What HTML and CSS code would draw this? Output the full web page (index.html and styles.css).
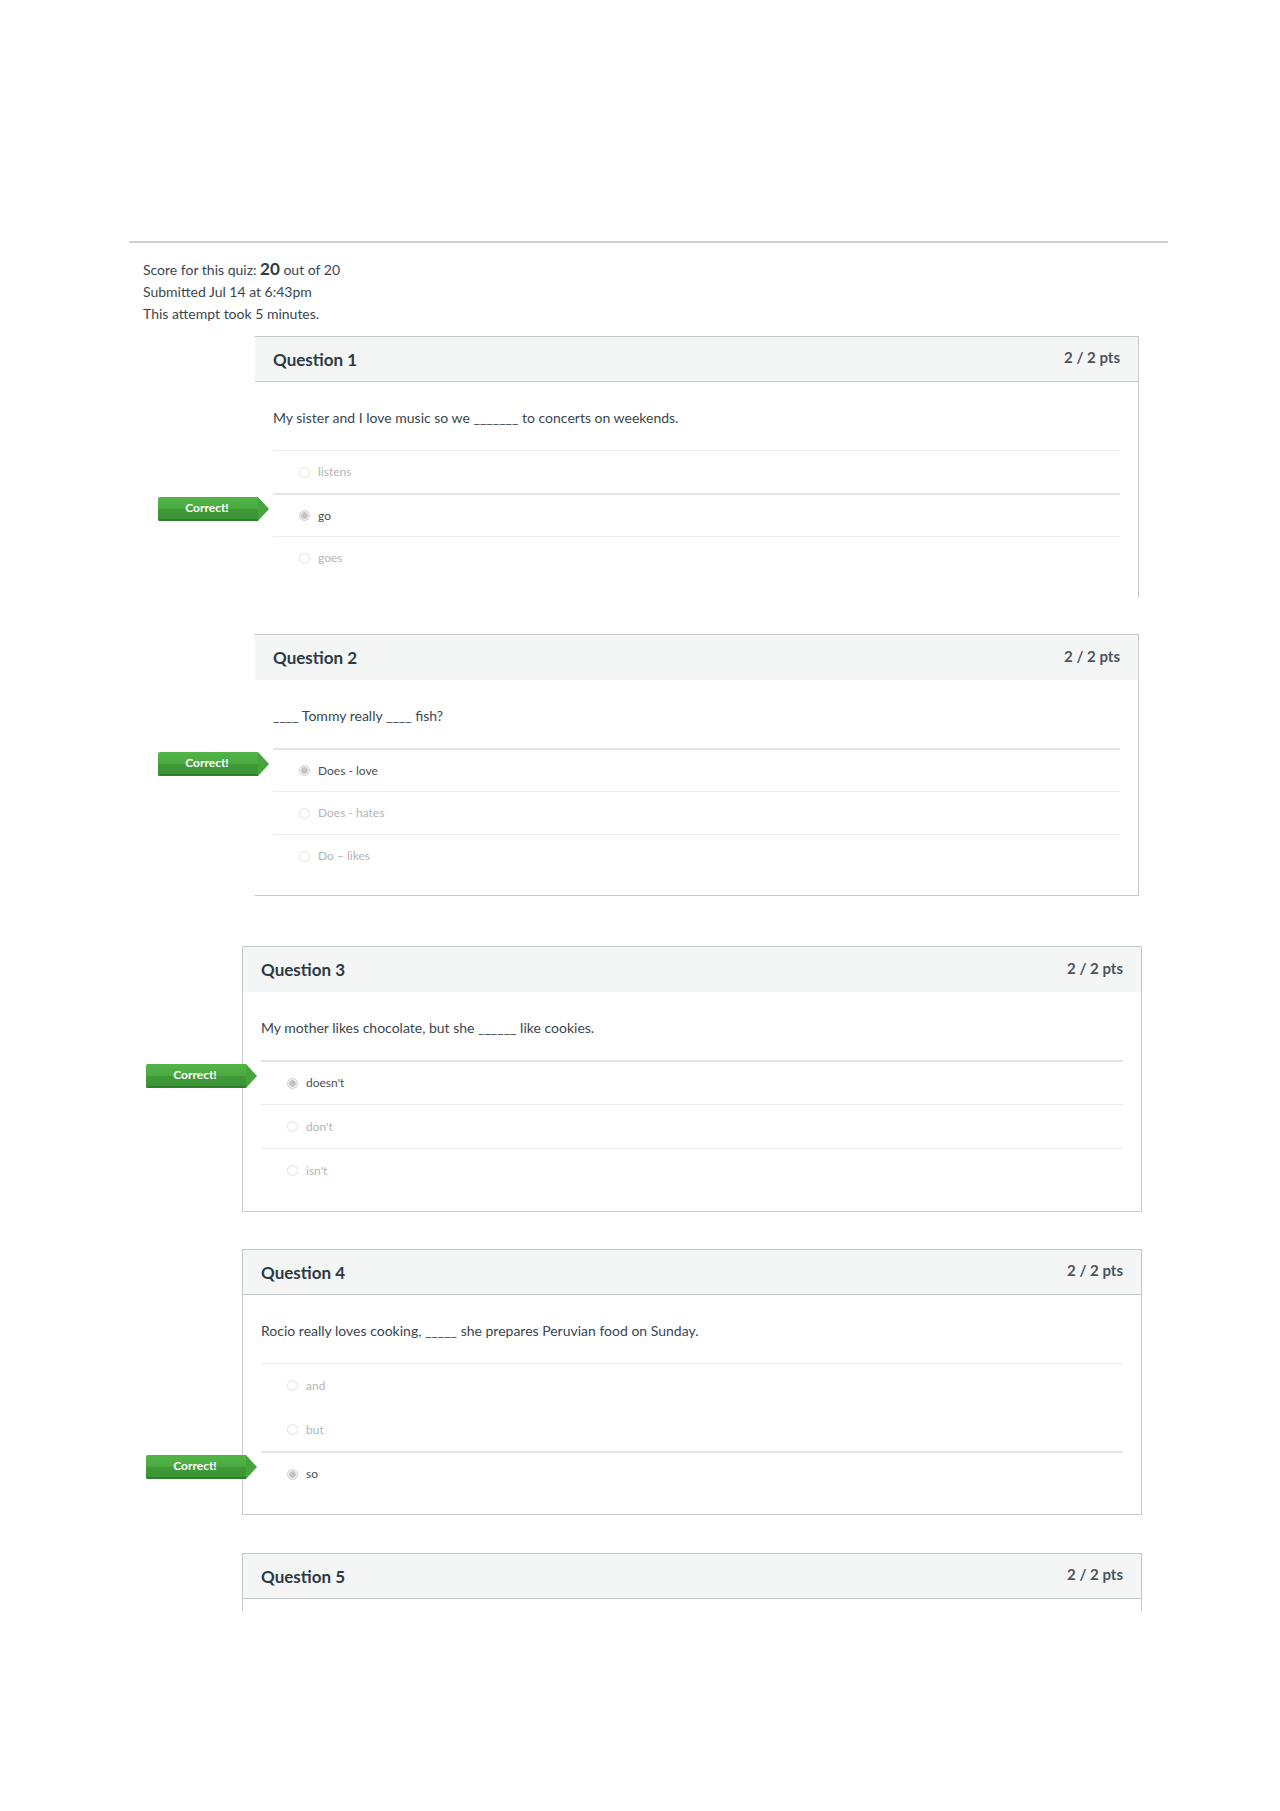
FILE: index.html
```html
<!DOCTYPE html>
<html lang="en">
<head>
<meta charset="utf-8">
<title>Quiz results</title>
<link rel="stylesheet" href="styles.css">
</head>
<body>
<div class="page">
  <div class="summary">
    <div class="summary-line">Score for this quiz: <span class="score">20</span> out of 20</div>
    <div class="summary-line">Submitted Jul 14 at 6:43pm</div>
    <div class="summary-line">This attempt took 5 minutes.</div>
  </div>

  <div class="question q-narrow no-left no-bottom">
    <div class="q-header with-rule">
      <span class="q-title">Question 1</span>
      <span class="q-pts">2 / 2 pts</span>
    </div>
    <div class="q-body">
      <div class="q-text">My sister and I love music so we _______ to concerts on weekends.</div>
      <div class="answers">
        <div class="answer"><span class="radio"></span><span class="label">listens</span></div>
        <div class="answer selected"><span class="badge">Correct!</span><span class="radio"></span><span class="label">go</span></div>
        <div class="answer"><span class="radio"></span><span class="label">goes</span></div>
      </div>
    </div>
  </div>

  <div class="question q-narrow no-left gap-q2">
    <div class="q-header">
      <span class="q-title">Question 2</span>
      <span class="q-pts">2 / 2 pts</span>
    </div>
    <div class="q-body">
      <div class="q-text">____ Tommy really ____ fish?</div>
      <div class="answers">
        <div class="answer selected"><span class="badge">Correct!</span><span class="radio"></span><span class="label">Does - love</span></div>
        <div class="answer"><span class="radio"></span><span class="label">Does - hates</span></div>
        <div class="answer"><span class="radio"></span><span class="label">Do – likes</span></div>
      </div>
    </div>
  </div>

  <div class="question q-wide gap-q3">
    <div class="q-header">
      <span class="q-title">Question 3</span>
      <span class="q-pts">2 / 2 pts</span>
    </div>
    <div class="q-body">
      <div class="q-text">My mother likes chocolate, but she ______ like cookies.</div>
      <div class="answers">
        <div class="answer selected"><span class="badge">Correct!</span><span class="radio"></span><span class="label">doesn't</span></div>
        <div class="answer"><span class="radio"></span><span class="label">don't</span></div>
        <div class="answer"><span class="radio"></span><span class="label">isn't</span></div>
      </div>
    </div>
  </div>

  <div class="question q-wide gap-q4">
    <div class="q-header with-rule">
      <span class="q-title">Question 4</span>
      <span class="q-pts">2 / 2 pts</span>
    </div>
    <div class="q-body">
      <div class="q-text">Rocio really loves cooking, _____ she prepares Peruvian food on Sunday.</div>
      <div class="answers">
        <div class="answer"><span class="radio"></span><span class="label">and</span></div>
        <div class="answer no-rule"><span class="radio"></span><span class="label">but</span></div>
        <div class="answer selected"><span class="badge">Correct!</span><span class="radio"></span><span class="label">so</span></div>
      </div>
    </div>
  </div>

  <div class="question q-wide gap-q5 no-bottom">
    <div class="q-header with-rule">
      <span class="q-title">Question 5</span>
      <span class="q-pts">2 / 2 pts</span>
    </div>
    <div class="q-body q-body-cut"></div>
  </div>
</div>
</body>
</html>
```
FILE: styles.css
```css
html, body {
  margin: 0;
  padding: 0;
  background: #ffffff;
}

body {
  font-family: Lato, "Open Sans", "Liberation Sans", sans-serif;
  color: #2d3b45;
  min-height: 1811px;
}

.page {
  margin-left: 129px;
  width: 1039px;
  padding-top: 241px;
}

.summary {
  border-top: 2px solid #cfcfcf;
  padding: 15px 0 11px 14px;
  font-size: 14px;
  color: #3a4650;
}

.summary-line {
  line-height: 22px;
  height: 22px;
}

.summary-line:first-child {
  height: 23px;
}

.score {
  font-size: 17px;
  font-weight: 700;
  color: #2d3b45;
}

/* question card */
.question {
  border: 1px solid #c6c9cc;
  background: #ffffff;
}

.q-narrow {
  margin-left: 125px;
  width: 883px;
}

.q-wide {
  margin-left: 113px;
  width: 898px;
}

.no-left {
  border-left-color: transparent;
}

.no-bottom {
  border-bottom-color: transparent;
}

.gap-q2 { margin-top: 36px; }
.gap-q3 { margin-top: 50px; }
.gap-q4 { margin-top: 37px; }
.gap-q5 { margin-top: 38px; }

.q-header {
  height: 45px;
  background: #f4f5f5;
  display: flex;
  align-items: center;
  justify-content: space-between;
  padding: 0 18px;
  box-sizing: border-box;
}

.q-header.with-rule {
  border-bottom: 1px solid #c6c9cc;
}

.q-title {
  font-size: 17px;
  font-weight: 700;
  color: #2d3b45;
}

.q-pts {
  font-size: 15px;
  font-weight: 700;
  color: #4a555d;
  margin-top: -4px;
}

.q-body {
  padding: 0 18px 18px;
}

.q-wide .q-body {
  padding-bottom: 19px;
}

.q-wide .q-body-cut,
.q-body-cut {
  height: 12px;
  padding: 0;
}

.q-text {
  font-size: 14px;
  line-height: 18px;
  padding: 27px 0 23px;
  color: #3a4650;
}

.answers {
  display: flex;
  flex-direction: column;
}

.answer {
  position: relative;
  height: 43px;
  box-sizing: border-box;
  display: flex;
  align-items: center;
  border-top: 1px solid #ececec;
  font-size: 12px;
  color: #b4b4b4;
}

.q-wide .answer {
  height: 44px;
}

.answer.no-rule {
  border-top-color: transparent;
}

.answer.selected {
  border-top: 2px solid #e4e4e4;
  color: #4a4f54;
}

.radio {
  width: 11px;
  height: 11px;
  margin-left: 26px;
  margin-right: 8px;
  border: 1px solid #e1e1e1;
  border-radius: 50%;
  box-sizing: border-box;
  background: #ffffff;
  flex: none;
}

.answer.selected .radio {
  border-color: #d0d0d0;
  background: radial-gradient(circle, #c4c4c4 0 3px, #f0f0f0 3.5px);
}

.label {
  line-height: 16px;
}

/* Correct! flag overlapping the card edge */
.badge {
  position: absolute;
  right: calc(100% + 15px);
  top: 2px;
  width: 100px;
  height: 24px;
  box-sizing: border-box;
  padding: 0 2px 3px 0;
  display: flex;
  align-items: center;
  justify-content: center;
  font-size: 12px;
  font-weight: 700;
  color: #ffffff;
  border-radius: 2px 0 0 2px;
  background: linear-gradient(#52b447 0, #4aaa40 50%, #3f9a37 50%, #3b9334 100%);
  box-shadow: inset 0 -2px 0 #2f7f2a;
}

.badge::after {
  content: "";
  position: absolute;
  left: 100%;
  top: 0;
  width: 0;
  height: 0;
  border-top: 12px solid transparent;
  border-bottom: 12px solid transparent;
  border-left: 11px solid #46a43d;
}
```
